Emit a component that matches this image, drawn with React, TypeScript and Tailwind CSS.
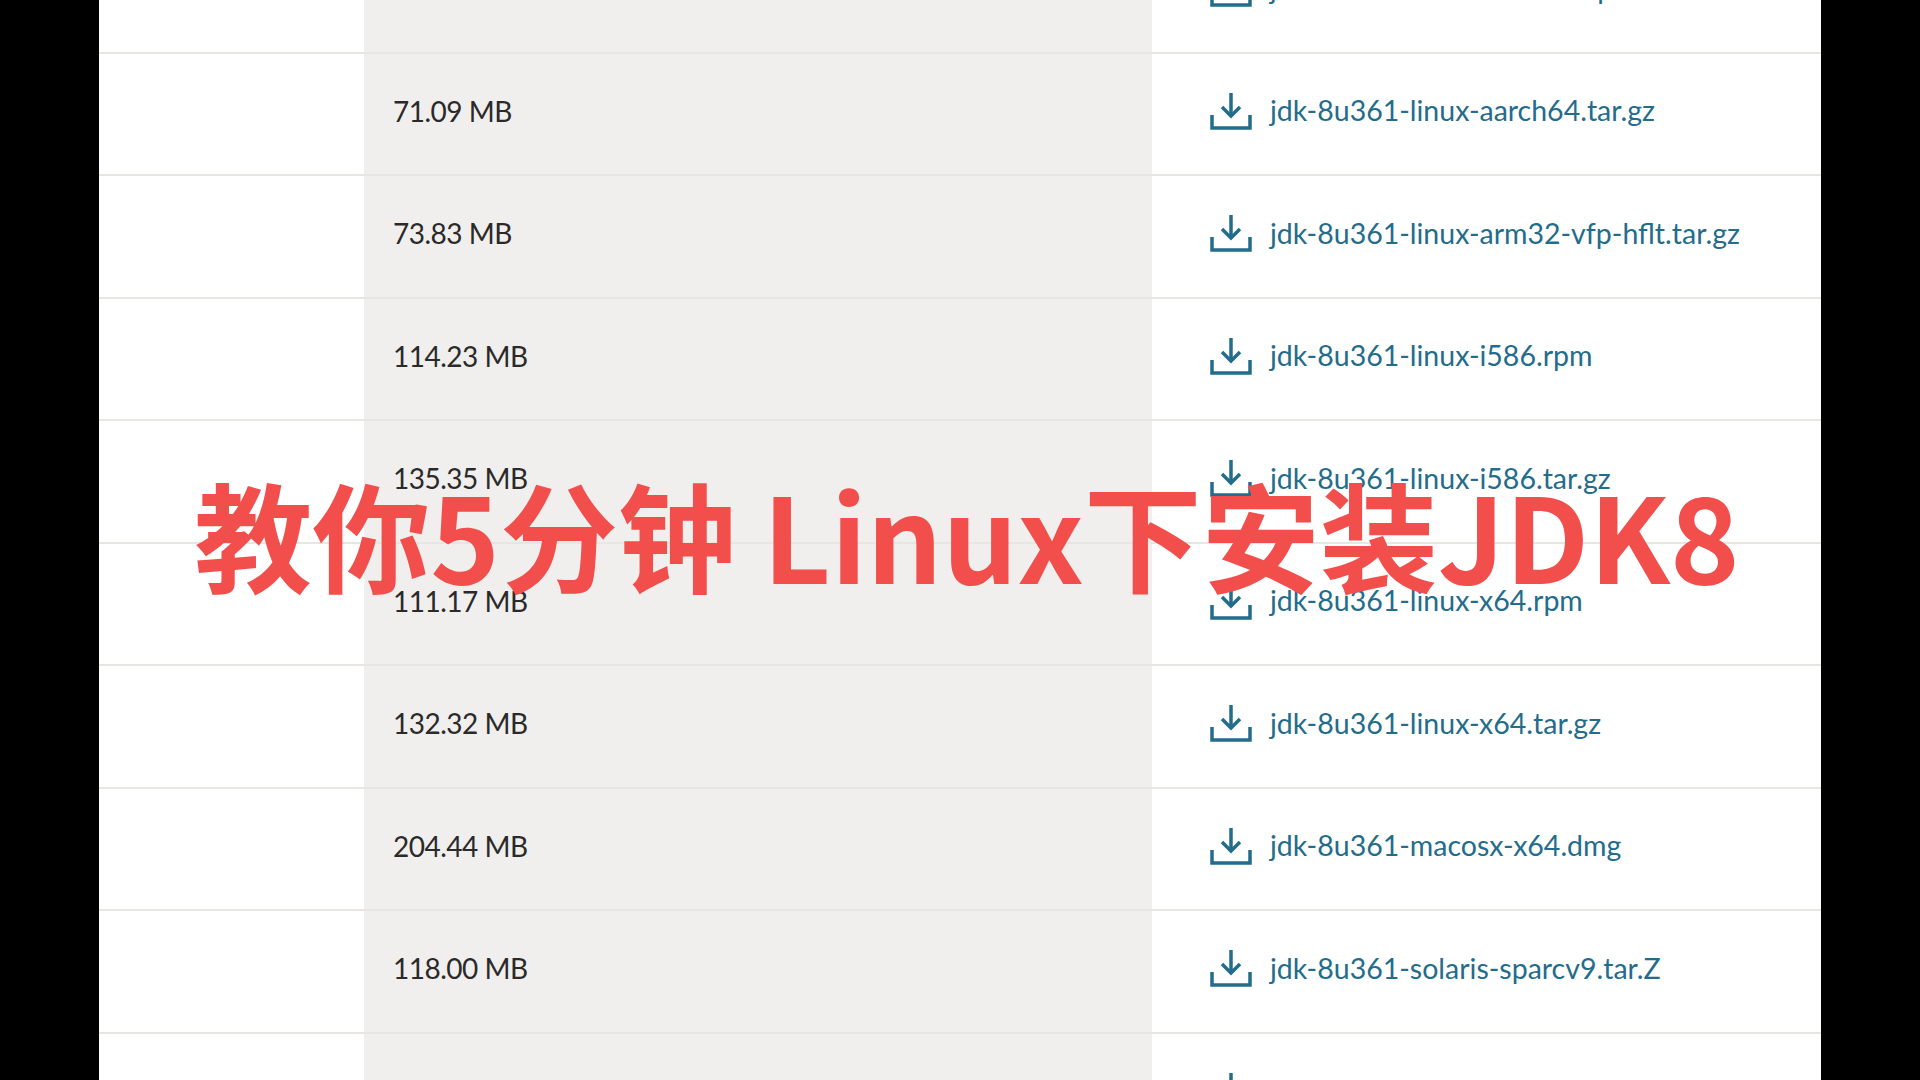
const rows = [
  ["71.97 MB", "jdk-8u361-linux-aarch64.rpm"],
  ["71.09 MB", "jdk-8u361-linux-aarch64.tar.gz"],
  ["73.83 MB", "jdk-8u361-linux-arm32-vfp-hflt.tar.gz"],
  ["114.23 MB", "jdk-8u361-linux-i586.rpm"],
  ["135.35 MB", "jdk-8u361-linux-i586.tar.gz"],
  ["111.17 MB", "jdk-8u361-linux-x64.rpm"],
  ["132.32 MB", "jdk-8u361-linux-x64.tar.gz"],
  ["204.44 MB", "jdk-8u361-macosx-x64.dmg"],
  ["118.00 MB", "jdk-8u361-solaris-sparcv9.tar.Z"],
  ["84.03 MB", "jdk-8u361-solaris-sparcv9.tar.gz"],
];

function DlIcon() {
  return (
    <svg width="44" height="40" viewBox="0 0 44 40" fill="none" stroke="#236c8c" strokeWidth="3.5">
      <path d="M22 2 V24" />
      <path d="M13 16 L22 25 L31 16" />
      <path d="M3 24 V37 H41 V24" />
    </svg>
  );
}

export default function App() {
  return (
    <div className="w-[1920px] h-[1080px] bg-black overflow-hidden relative" style={{ fontFamily: "Lato, 'Open Sans', sans-serif" }}>
      <div className="ml-[99px] w-[1722px] h-full bg-white overflow-hidden">
        <div className="-mt-[69px] flex flex-col">
          {rows.map(([size, name], i) => (
            <div key={i} className="flex h-[122.5px] border-b-2 border-[#e8e6e3]">
              <div className="w-[265px] bg-white" />
              <div className="w-[788px] bg-[#f1efed] flex items-center pl-[29px] pb-[6px] text-[28px] text-[#2a2a2a] tracking-[-0.5px]">{size}</div>
              <div className="flex-1 flex items-center pl-[57px] pb-[6px] gap-[17px]">
                <DlIcon />
                <span className="text-[28.5px] text-[#236c8c]">{name}</span>
              </div>
            </div>
          ))}
        </div>
      </div>
      <div className="absolute left-0 right-0 top-[474px] flex justify-center pl-[14px]">
        <div className="text-[118px] font-bold text-[#f24e4c] leading-none whitespace-nowrap" style={{ fontFamily: "'Noto Sans CJK SC', 'Noto Sans', sans-serif" }}>
          教你5分钟 Linux下安装JDK8
        </div>
      </div>
    </div>
  );
}
